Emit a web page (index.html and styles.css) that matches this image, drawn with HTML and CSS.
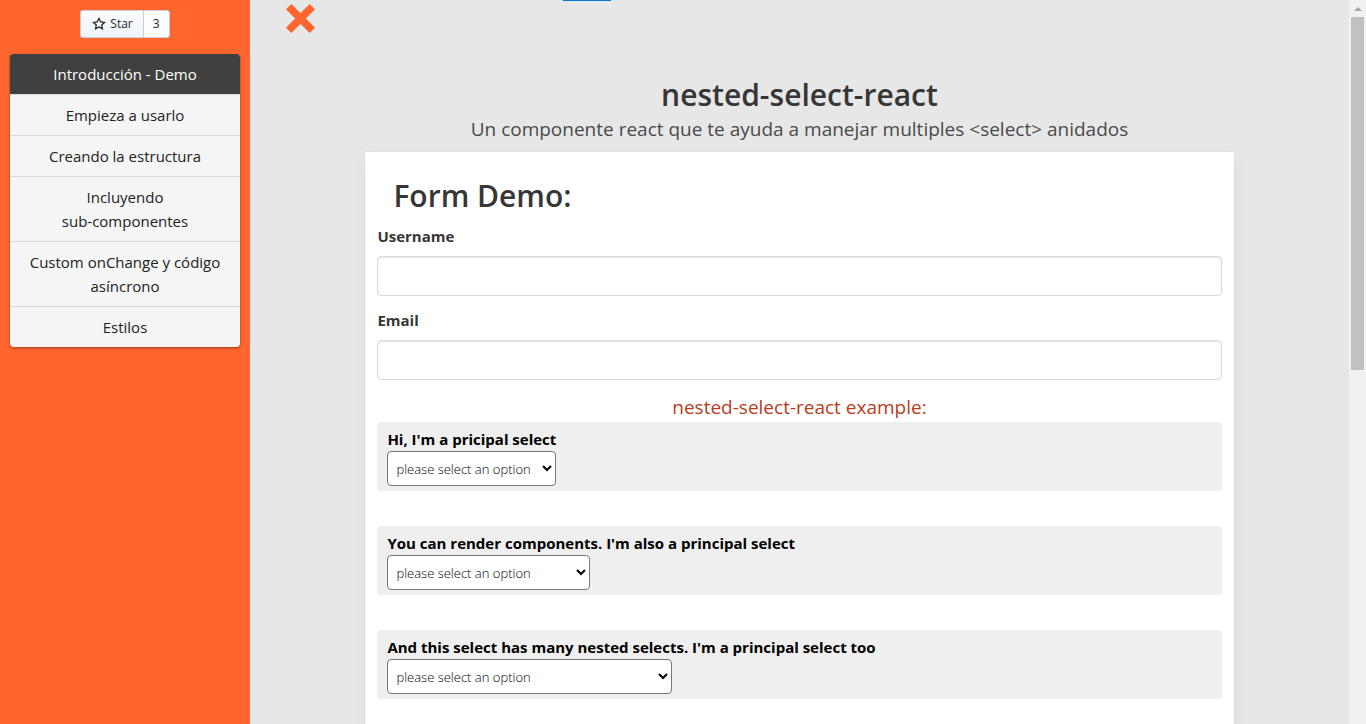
FILE: index.html
```html
<!DOCTYPE html>
<html lang="es">
<head>
    <meta charset="UTF-8">
    <meta name="viewport" content="width=device-width, initial-scale=1.0">
    <title>nested-select-react</title>
    <link rel="stylesheet" href="styles.css">
</head>
<body>
    <div class="app">
        <!-- Menu lateral -->
        <aside class="sidebar">
            <div class="github">
                <a class="github-star" href="#">
                    <svg width="16" height="16" viewBox="0 0 14 16" aria-hidden="true"><path fill="#24292e" fill-rule="evenodd" d="M14 6l-4.9-.64L7 1 4.9 5.36 0 6l3.6 3.26L2.67 14 7 11.67 11.33 14l-.93-4.74L14 6zM7 10.2l-2.57 1.38.55-2.82-2.13-1.94 2.9-.38L7 3.85l1.25 2.59 2.9.38-2.13 1.94.55 2.82L7 10.2z"/></svg>
                    <span>Star</span>
                </a>
                <a class="github-count" href="#">3</a>
            </div>
            <nav class="menu">
                <a class="menu-item activo" href="#">Introducción - Demo</a>
                <a class="menu-item" href="#">Empieza a usarlo</a>
                <a class="menu-item" href="#">Creando la estructura</a>
                <a class="menu-item" href="#">Incluyendo<br>sub-componentes</a>
                <a class="menu-item" href="#">Custom onChange y código asíncrono</a>
                <a class="menu-item" href="#">Estilos</a>
            </nav>
        </aside>

        <!-- Contenido -->
        <main class="contenido">
            <div class="marca"></div>
            <button class="cerrar" type="button" aria-label="Cerrar">
                <svg width="30" height="30" viewBox="0 0 30 30" aria-hidden="true"><path fill="#ff652d" stroke="#ff652d" stroke-width="1" stroke-linejoin="round" d="M5.3.5 14.5 9.7 23.7.5 28.5 5.3 19.3 14.5l9.2 9.2-4.8 4.8-9.2-9.2-9.2 9.2L.5 23.7l9.2-9.2L.5 5.3z"/></svg>
            </button>

            <header class="cabecera">
                <h1 class="titulo">nested-select-react</h1>
                <p class="subtitulo">Un componente react que te ayuda a manejar multiples &lt;select&gt; anidados</p>
            </header>

            <form class="caja">
                <h2 class="titulo titulo-form">Form Demo:</h2>
                <div class="campo">
                    <label for="username">Username</label>
                    <input id="username" type="text">
                </div>
                <div class="campo">
                    <label for="email">Email</label>
                    <input id="email" type="email">
                </div>

                <p class="ejemplo">nested-select-react example:</p>
                <div class="grupo">
                    <label for="select1">Hi, I'm a pricipal select</label>
                    <select id="select1" class="select-corto">
                        <option>please select an option</option>
                    </select>
                </div>
                <div class="grupo">
                    <label for="select2">You can render components. I'm also a principal select</label>
                    <select id="select2" class="select-medio">
                        <option>please select an option</option>
                    </select>
                </div>
                <div class="grupo">
                    <label for="select3">And this select has many nested selects. I'm a principal select too</label>
                    <select id="select3" class="select-largo">
                        <option>please select an option</option>
                    </select>
                </div>
            </form>
        </main>

        <!-- Barra de scroll -->
        <div class="scroll">
            <div class="scroll-flecha"></div>
            <div class="scroll-barra"></div>
        </div>
    </div>
</body>
</html>
```
FILE: styles.css
```css
* {
    box-sizing: border-box;
}

body {
    margin: 0;
    font-family: "Open Sans", "Noto Sans", sans-serif;
    font-size: 15px;
    line-height: 24px;
    color: #4a4a4a;
    background-color: #e7e7e7;
}

h1, h2, p {
    margin: 0;
}

a {
    text-decoration: none;
}

.app {
    display: flex;
    height: 100vh;
    overflow: hidden;
}

/* sidebar */
.sidebar {
    flex: none;
    width: 250px;
    padding: 10px;
    background-color: #ff652d;
}

.github {
    display: flex;
    justify-content: center;
    margin-bottom: 16px;
    font-size: 12px;
    line-height: 26px;
}

.github a {
    display: flex;
    align-items: center;
    color: #24292e;
    border: 1px solid #c5d0da;
}

.github .github-star {
    gap: 3px;
    padding: 0 10px;
    background-image: linear-gradient(#fafbfc, #eff3f6);
    border-right: none;
    border-radius: 3px 0 0 3px;
}

.github .github-count {
    padding: 0 9px;
    background-color: white;
    border-radius: 0 3px 3px 0;
}

.menu {
    border-radius: 4px;
    overflow: hidden;
    box-shadow: 0 1px 3px rgba(0, 0, 0, 0.4);
}

.menu-item {
    display: block;
    padding: 8px 16px;
    text-align: center;
    color: #222;
    background-color: #f5f5f5;
    border-bottom: 1px solid #d8d8d8;
}

.menu-item:last-child {
    border-bottom: none;
}

.menu-item.activo {
    color: white;
    background-color: #404040;
}

/* contenido */
.contenido {
    position: relative;
    flex: 1;
    min-width: 0;
}

.marca {
    position: absolute;
    top: 0;
    left: 313px;
    width: 48px;
    height: 1px;
    background-color: #0078d7;
}

.cerrar {
    display: block;
    margin: 4px 0 43px 36px;
    padding: 0;
    border: none;
    background: none;
    cursor: pointer;
}

.cerrar svg {
    display: block;
}

.cabecera {
    text-align: center;
    margin-bottom: 10px;
}

.titulo {
    font-size: 30px;
    font-weight: 600;
    line-height: 36px;
    color: #363636;
}

.subtitulo {
    margin-top: 4px;
    font-size: 19px;
    line-height: 25px;
}

.caja {
    width: 79%;
    min-height: 100%;
    margin: 0 auto;
    padding: 12px;
    background-color: white;
    box-shadow: 0 8px 16px rgba(10, 10, 10, 0.05), 0 0 0 1px rgba(10, 10, 10, 0.02);
}

.titulo-form {
    margin: 14px 16px 10px;
}

.campo {
    margin-bottom: 12px;
    color: #363636;
}

.campo label,
.grupo label {
    display: block;
    font-size: 15px;
    font-weight: 700;
}

.campo input {
    display: block;
    width: 100%;
    height: 40px;
    margin-top: 8px;
    padding: 8px 12px;
    font: inherit;
    border: 1px solid #dbdbdb;
    border-radius: 4px;
    box-shadow: inset 0 1px 2px rgba(10, 10, 10, 0.1);
}

.ejemplo {
    font-size: 19px;
    line-height: 30px;
    text-align: center;
    color: #b83c1c;
}

.grupo {
    margin-bottom: 35px;
    padding: 5px 10px;
    background-color: #efefef;
    border-radius: 4px;
    color: black;
}

.grupo select {
    display: block;
    height: 35px;
    padding: 0 5px 0 4px;
    font-family: inherit;
    font-size: 13px;
    font-weight: 300;
    color: black;
    background-color: white;
    border: 1px solid #767676;
    border-radius: 4px;
}

.select-corto {
    width: 169px;
}

.select-medio {
    width: 203px;
}

.select-largo {
    width: 285px;
}

/* scroll */
.scroll {
    display: flex;
    flex-direction: column;
    align-items: center;
    flex: none;
    width: 17px;
    padding-top: 7px;
    background-color: #f1f1f1;
}

.scroll-flecha {
    border-left: 4px solid transparent;
    border-right: 4px solid transparent;
    border-bottom: 4px solid #a3a3a3;
    margin-bottom: 6px;
}

.scroll-barra {
    width: 13px;
    flex: 0 0 353px;
    background-color: #c1c1c1;
}
```
